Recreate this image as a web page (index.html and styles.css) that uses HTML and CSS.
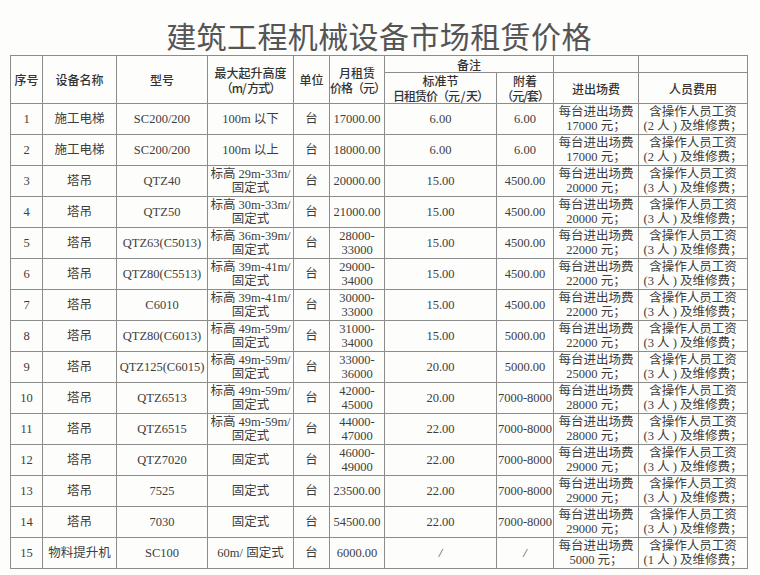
FILE: index.html
```html
<!DOCTYPE html>
<html lang="zh-CN">
<head>
<meta charset="utf-8">
<title>建筑工程机械设备市场租赁价格</title>
<link rel="stylesheet" href="styles.css">
</head>
<body>
<div class="page">
  <h1 class="title">建筑工程机械设备市场租赁价格</h1>
  <table class="price-table">
    <colgroup>
      <col class="c-no"><col class="c-name"><col class="c-model"><col class="c-height"><col class="c-unit"><col class="c-month"><col class="c-std"><col class="c-att"><col class="c-in"><col class="c-staff">
    </colgroup>
    <thead>
      <tr class="h1">
        <th rowspan="2">序号</th>
        <th rowspan="2">设备名称</th>
        <th rowspan="2">型号</th>
        <th rowspan="2">最大起升高度<br><span class="tight">（m/ 方式）</span></th>
        <th rowspan="2">单位</th>
        <th rowspan="2">月租赁<br><span class="tight">价格（元）</span></th>
        <th colspan="2">备注</th>
        <th></th>
        <th></th>
      </tr>
      <tr class="h2">
        <th>标准节<br><span class="tight">日租赁价（元 / 天）</span></th>
        <th>附着<br><span class="tight">（元/套）</span></th>
        <th>进出场费</th>
        <th>人员费用</th>
      </tr>
    </thead>
    <tbody>
      <tr><td>1</td><td>施工电梯</td><td>SC200/200</td><td>100m 以下</td><td>台</td><td>17000.00</td><td>6.00</td><td>6.00</td><td>每台进出场费<br>17000 元；</td><td>含操作人员工资<br>(2 人 ) 及维修费；</td></tr>
      <tr><td>2</td><td>施工电梯</td><td>SC200/200</td><td>100m 以上</td><td>台</td><td>18000.00</td><td>6.00</td><td>6.00</td><td>每台进出场费<br>17000 元；</td><td>含操作人员工资<br>(2 人 ) 及维修费；</td></tr>
      <tr><td>3</td><td>塔吊</td><td>QTZ40</td><td>标高 29m-33m/<br>固定式</td><td>台</td><td>20000.00</td><td>15.00</td><td>4500.00</td><td>每台进出场费<br>20000 元；</td><td>含操作人员工资<br>(3 人 ) 及维修费；</td></tr>
      <tr><td>4</td><td>塔吊</td><td>QTZ50</td><td>标高 30m-33m/<br>固定式</td><td>台</td><td>21000.00</td><td>15.00</td><td>4500.00</td><td>每台进出场费<br>20000 元；</td><td>含操作人员工资<br>(3 人 ) 及维修费；</td></tr>
      <tr><td>5</td><td>塔吊</td><td>QTZ63(C5013)</td><td>标高 36m-39m/<br>固定式</td><td>台</td><td>28000-<br>33000</td><td>15.00</td><td>4500.00</td><td>每台进出场费<br>22000 元；</td><td>含操作人员工资<br>(3 人 ) 及维修费；</td></tr>
      <tr><td>6</td><td>塔吊</td><td>QTZ80(C5513)</td><td>标高 39m-41m/<br>固定式</td><td>台</td><td>29000-<br>34000</td><td>15.00</td><td>4500.00</td><td>每台进出场费<br>22000 元；</td><td>含操作人员工资<br>(3 人 ) 及维修费；</td></tr>
      <tr><td>7</td><td>塔吊</td><td>C6010</td><td>标高 39m-41m/<br>固定式</td><td>台</td><td>30000-<br>33000</td><td>15.00</td><td>4500.00</td><td>每台进出场费<br>22000 元；</td><td>含操作人员工资<br>(3 人 ) 及维修费；</td></tr>
      <tr><td>8</td><td>塔吊</td><td>QTZ80(C6013)</td><td>标高 49m-59m/<br>固定式</td><td>台</td><td>31000-<br>34000</td><td>15.00</td><td>5000.00</td><td>每台进出场费<br>22000 元；</td><td>含操作人员工资<br>(3 人 ) 及维修费；</td></tr>
      <tr><td>9</td><td>塔吊</td><td>QTZ125(C6015)</td><td>标高 49m-59m/<br>固定式</td><td>台</td><td>33000-<br>36000</td><td>20.00</td><td>5000.00</td><td>每台进出场费<br>25000 元；</td><td>含操作人员工资<br>(3 人 ) 及维修费；</td></tr>
      <tr><td>10</td><td>塔吊</td><td>QTZ6513</td><td>标高 49m-59m/<br>固定式</td><td>台</td><td>42000-<br>45000</td><td>20.00</td><td>7000-8000</td><td>每台进出场费<br>28000 元；</td><td>含操作人员工资<br>(3 人 ) 及维修费；</td></tr>
      <tr><td>11</td><td>塔吊</td><td>QTZ6515</td><td>标高 49m-59m/<br>固定式</td><td>台</td><td>44000-<br>47000</td><td>22.00</td><td>7000-8000</td><td>每台进出场费<br>28000 元；</td><td>含操作人员工资<br>(3 人 ) 及维修费；</td></tr>
      <tr><td>12</td><td>塔吊</td><td>QTZ7020</td><td>固定式</td><td>台</td><td>46000-<br>49000</td><td>22.00</td><td>7000-8000</td><td>每台进出场费<br>29000 元；</td><td>含操作人员工资<br>(3 人 ) 及维修费；</td></tr>
      <tr><td>13</td><td>塔吊</td><td>7525</td><td>固定式</td><td>台</td><td>23500.00</td><td>22.00</td><td>7000-8000</td><td>每台进出场费<br>29000 元；</td><td>含操作人员工资<br>(3 人 ) 及维修费；</td></tr>
      <tr><td>14</td><td>塔吊</td><td>7030</td><td>固定式</td><td>台</td><td>54500.00</td><td>22.00</td><td>7000-8000</td><td>每台进出场费<br>29000 元；</td><td>含操作人员工资<br>(3 人 ) 及维修费；</td></tr>
      <tr><td>15</td><td>物料提升机</td><td>SC100</td><td>60m/ 固定式</td><td>台</td><td>6000.00</td><td class="slash">/</td><td class="slash">/</td><td>每台进出场费<br>5000 元；</td><td>含操作人员工资<br>(1 人 ) 及维修费；</td></tr>
    </tbody>
  </table>
</div>
</body>
</html>
```

FILE: styles.css
```css
html, body {
  margin: 0;
  padding: 0;
  background: #fdfdfc;
}

.page {
  width: 760px;
  height: 575px;
  overflow: hidden;
  padding: 0 0 0 10px;
  box-sizing: border-box;
}

.title {
  margin: 0;
  height: 55px;
  box-sizing: border-box;
  padding-top: 17px;
  padding-right: 12px;
  font-family: "Noto Sans CJK SC", sans-serif;
  font-weight: 400;
  font-size: 30px;
  line-height: 36px;
  letter-spacing: 0.4px;
  text-align: center;
  color: #555555;
}

.price-table {
  border-collapse: collapse;
  table-layout: fixed;
  width: 737px;
  color: #3d3d3d;
  font-family: "Liberation Serif", "Noto Sans CJK SC", serif;
  font-size: 12.5px;
}

.c-no { width: 32px; }
.c-name { width: 74px; }
.c-model { width: 91px; }
.c-height { width: 86px; }
.c-unit { width: 36px; }
.c-month { width: 55px; }
.c-std { width: 112px; }
.c-att { width: 57px; }
.c-in { width: 85px; }
.c-staff { width: 109px; }

.price-table th,
.price-table td {
  border: 1px solid #8c8c8c;
  padding: 0;
  text-align: center;
  vertical-align: middle;
  white-space: nowrap;
}

.price-table th {
  font-family: "Noto Sans CJK SC", sans-serif;
  font-weight: 500;
  font-size: 12px;
  line-height: 15px;
  color: #333333;
}

.tight {
  letter-spacing: -1px;
}

.h1 th {
  height: 16px;
}

.h2 th {
  height: 30px;
}

.price-table td {
  height: 30px;
  line-height: 14px;
}

.price-table td.slash {
  font-style: italic;
}
```
